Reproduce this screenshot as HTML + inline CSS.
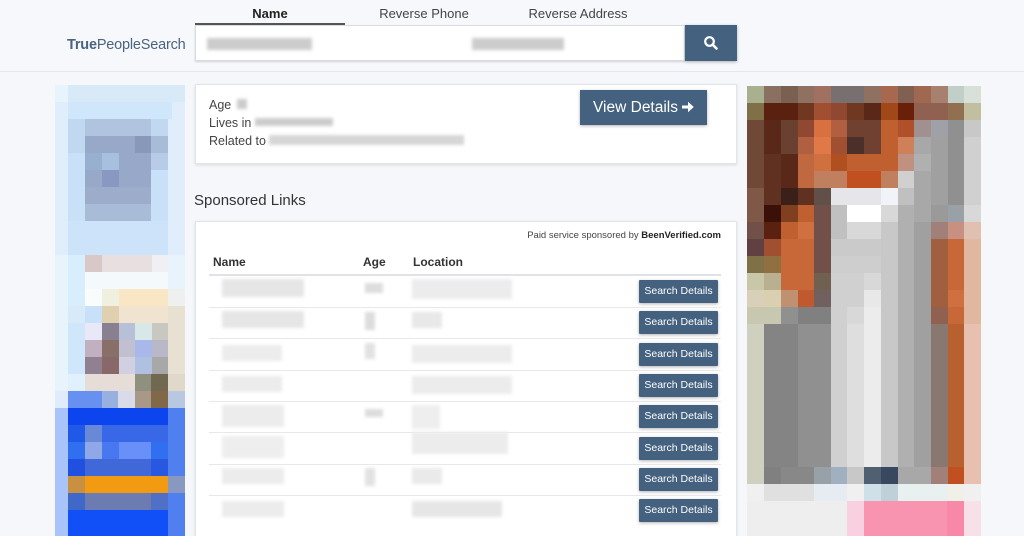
<!DOCTYPE html>
<html><head><meta charset="utf-8"><style>
*{margin:0;padding:0;box-sizing:border-box}
html,body{width:1024px;height:536px;overflow:hidden}
body{background:#f5f7fa;font-family:"Liberation Sans",sans-serif;color:#333;position:relative}
.a{position:absolute}
.hdr{left:0;top:0;width:1024px;height:72px;background:#f7f8fb;border-bottom:1px solid #e4e7ec}
.tab{top:6px;font-size:13px;color:#444;text-align:center}
.btn{background:#44617f;color:#fff;box-shadow:0 1px 3px rgba(0,0,0,.3)}
.card{background:#fff;border:1px solid #e2e5ea;box-shadow:0 1px 3px rgba(0,0,0,.12)}
.g{display:flex}
.g div{flex:none}
.bl{background:#e6e6e6;filter:blur(1.5px)}
.sd{left:639px;width:79px;height:23px;font-size:10.5px;line-height:23px;text-align:center;border-radius:1px}
.rl{left:209px;width:512px;height:1px;background:#e6e8eb}
</style></head><body>
<div class="a hdr"></div>
<div class="a tab" style="left:195px;width:150px;font-weight:bold;color:#222">Name</div>
<div class="a" style="left:195px;top:23px;width:150px;height:2px;background:#555"></div>
<div class="a tab" style="left:350px;width:148px">Reverse Phone</div>
<div class="a tab" style="left:500px;width:156px">Reverse Address</div>
<div class="a" style="left:67px;top:37px;font-size:14.5px;color:#4a6380;letter-spacing:-0.2px"><b>True</b>PeopleSearch</div>
<div class="a" style="left:195px;top:25px;width:490px;height:36px;background:#fff;border:1px solid #d8dce2;box-shadow:0 1px 2px rgba(0,0,0,.15)"></div>
<div class="a bl" style="left:207px;top:38px;width:105px;height:12px;background:#ccc"></div>
<div class="a bl" style="left:472px;top:38px;width:92px;height:12px;background:#ccc"></div>
<div class="a btn" style="left:685px;top:25px;width:52px;height:36px"></div>
<svg class="a" style="left:703px;top:35px" width="16" height="16" viewBox="0 0 16 16"><circle cx="6.5" cy="6.5" r="4.3" fill="none" stroke="#fff" stroke-width="2.2"/><path d="M9.6 9.6L13.5 13.5" stroke="#fff" stroke-width="2.6" stroke-linecap="round"/></svg>

<div class="a card" style="left:195px;top:84px;width:542px;height:80px"></div>
<div class="a" style="left:209px;top:96px;font-size:12.5px;line-height:18px;color:#444">Age<br>Lives in<br>Related to</div>
<div class="a bl" style="left:237px;top:99px;width:10px;height:10px;background:#ccc"></div>
<div class="a bl" style="left:255px;top:118px;width:78px;height:8px;background:#ccc"></div>
<div class="a bl" style="left:269px;top:135px;width:195px;height:10px;background:#d6d6d6"></div>
<div class="a btn" style="left:580px;top:90px;width:127px;height:35px;font-size:15.5px;line-height:35px;padding-left:13px">View Details</div>
<svg class="a" style="left:681px;top:100px" width="14" height="14" viewBox="0 0 14 14"><path d="M1 5.5H7V1.8L12.8 7L7 12.2V8.5H1Z" fill="#fff"/></svg>

<div class="a" style="left:194px;top:192px;font-size:15px;color:#333">Sponsored Links</div>
<div class="a card" style="left:195px;top:221px;width:542px;height:330px"></div>
<div class="a" style="left:400px;top:230px;width:321px;text-align:right;font-size:9.5px;color:#444">Paid service sponsored by <b style="color:#222">BeenVerified.com</b></div>
<div class="a" style="left:213px;top:255px;font-size:12px;font-weight:bold;color:#333">Name</div>
<div class="a" style="left:363px;top:255px;font-size:12px;font-weight:bold;color:#333">Age</div>
<div class="a" style="left:413px;top:255px;font-size:12px;font-weight:bold;color:#333">Location</div>
<div class="a" style="left:209px;top:274px;width:512px;height:2px;background:#dfe2e6"></div>

<div class="a rl" style="top:307px"></div><div class="a rl" style="top:338px"></div><div class="a rl" style="top:370px"></div><div class="a rl" style="top:401px"></div><div class="a rl" style="top:432px"></div><div class="a rl" style="top:464px"></div><div class="a rl" style="top:495px"></div>

<div class="a bl" style="left:222px;top:279px;width:82px;height:18px"></div><div class="a bl" style="left:365px;top:283px;width:18px;height:10px;background:#ddd"></div><div class="a bl" style="left:412px;top:279px;width:100px;height:20px;background:#ececec"></div>
<div class="a bl" style="left:222px;top:311px;width:82px;height:17px"></div><div class="a bl" style="left:365px;top:312px;width:10px;height:18px;background:#ddd"></div><div class="a bl" style="left:412px;top:312px;width:30px;height:16px;background:#e8e8e8"></div>
<div class="a bl" style="left:222px;top:345px;width:60px;height:16px;background:#ececec"></div><div class="a bl" style="left:365px;top:343px;width:10px;height:16px;background:#e2e2e2"></div><div class="a bl" style="left:412px;top:345px;width:100px;height:18px;background:#ececec"></div>
<div class="a bl" style="left:222px;top:376px;width:60px;height:16px;background:#ececec"></div><div class="a bl" style="left:412px;top:376px;width:100px;height:18px;background:#ececec"></div>
<div class="a bl" style="left:222px;top:405px;width:62px;height:22px;background:#ececec"></div><div class="a bl" style="left:365px;top:409px;width:18px;height:8px;background:#ddd"></div><div class="a bl" style="left:412px;top:405px;width:28px;height:24px;background:#eee"></div>
<div class="a bl" style="left:222px;top:436px;width:62px;height:22px;background:#eee"></div><div class="a bl" style="left:412px;top:432px;width:96px;height:22px;background:#ececec"></div>
<div class="a bl" style="left:222px;top:468px;width:62px;height:16px;background:#ececec"></div><div class="a bl" style="left:365px;top:468px;width:10px;height:18px;background:#e2e2e2"></div><div class="a bl" style="left:412px;top:468px;width:30px;height:16px;background:#eaeaea"></div>
<div class="a bl" style="left:222px;top:501px;width:62px;height:16px;background:#ececec"></div><div class="a bl" style="left:412px;top:501px;width:90px;height:16px;background:#e6e6e6"></div>

<div class="a btn sd" style="top:280px">Search Details</div>
<div class="a btn sd" style="top:311px">Search Details</div>
<div class="a btn sd" style="top:343px">Search Details</div>
<div class="a btn sd" style="top:374px">Search Details</div>
<div class="a btn sd" style="top:405px">Search Details</div>
<div class="a btn sd" style="top:437px">Search Details</div>
<div class="a btn sd" style="top:468px">Search Details</div>
<div class="a btn sd" style="top:499px">Search Details</div>

<!-- left image -->
<div class="a" style="left:55px;top:85px;width:130px">
<div class="g" style="height:17px"><div style="width:13px;background:#e8f4fc"></div><div style="width:117px;background:#d8eaf8"></div></div>
<div class="g" style="height:17px"><div style="width:13px;background:#e0eefc"></div><div style="width:104px;background:#d0e6fa"></div><div style="width:13px;background:#e0eefc"></div></div>
<div class="g" style="height:17px"><div style="width:13px;background:#e0eefc"></div><div style="width:17px;background:#c0d8f0"></div><div style="width:66px;background:#b0c4e0"></div><div style="width:17px;background:#c0d8f0"></div><div style="width:17px;background:#e0eefc"></div></div>
<div class="g" style="height:17px"><div style="width:13px;background:#e0eefc"></div><div style="width:17px;background:#c0d8f0"></div><div style="width:50px;background:#98a8c8"></div><div style="width:16px;background:#8898b8"></div><div style="width:17px;background:#a8bcd8"></div><div style="width:17px;background:#e0eefc"></div></div>
<div class="g" style="height:17px"><div style="width:13px;background:#e0eefc"></div><div style="width:17px;background:#c8e0f8"></div><div style="width:17px;background:#98b0d0"></div><div style="width:17px;background:#a8c0e0"></div><div style="width:32px;background:#98a8c8"></div><div style="width:17px;background:#b8cce8"></div><div style="width:17px;background:#e0eefc"></div></div>
<div class="g" style="height:17px"><div style="width:13px;background:#e0eefc"></div><div style="width:17px;background:#c8e0f8"></div><div style="width:17px;background:#98a8c8"></div><div style="width:17px;background:#8898c0"></div><div style="width:32px;background:#98a8c8"></div><div style="width:17px;background:#c8e0f8"></div><div style="width:17px;background:#e0eefc"></div></div>
<div class="g" style="height:17px"><div style="width:13px;background:#e0eefc"></div><div style="width:17px;background:#c8e0f8"></div><div style="width:66px;background:#9cacca"></div><div style="width:17px;background:#c8e0f8"></div><div style="width:17px;background:#e0eefc"></div></div>
<div class="g" style="height:17px"><div style="width:13px;background:#e0eefc"></div><div style="width:17px;background:#c8e0f8"></div><div style="width:66px;background:#a8bcd8"></div><div style="width:17px;background:#c8e0f8"></div><div style="width:17px;background:#e0eefc"></div></div>
<div class="g" style="height:34px"><div style="width:13px;background:#e0eefc"></div><div style="width:100px;background:#cce3f9"></div><div style="width:17px;background:#e0eefc"></div></div>
<div class="g" style="height:17px"><div style="width:13px;background:#e8f4fc"></div><div style="width:17px;background:#d8eefc"></div><div style="width:17px;background:#d8c8c8"></div><div style="width:50px;background:#e8e0e0"></div><div style="width:16px;background:#f0f0f4"></div><div style="width:17px;background:#e8f4fc"></div></div>
<div class="g" style="height:17px"><div style="width:13px;background:#e8f4fc"></div><div style="width:17px;background:#d8eefc"></div><div style="width:83px;background:#f4fafc"></div><div style="width:17px;background:#e8f4fc"></div></div>
<div class="g" style="height:17px"><div style="width:13px;background:#e8f4fc"></div><div style="width:17px;background:#d8eefc"></div><div style="width:17px;background:#f8fcfc"></div><div style="width:17px;background:#f0f0e0"></div><div style="width:49px;background:#f8e6c4"></div><div style="width:17px;background:#eef0f0"></div></div>
<div class="g" style="height:17px"><div style="width:13px;background:#e8f4fc"></div><div style="width:17px;background:#d8eaf8"></div><div style="width:17px;background:#c8e0f8"></div><div style="width:17px;background:#e0d0b0"></div><div style="width:49px;background:#f0e4d0"></div><div style="width:17px;background:#e8e0d0"></div></div>
<div class="g" style="height:17px"><div style="width:13px;background:#e8f4fc"></div><div style="width:17px;background:#d0e6fa"></div><div style="width:17px;background:#e8e8f8"></div><div style="width:17px;background:#888090"></div><div style="width:16px;background:#b8c0d8"></div><div style="width:17px;background:#d8e8e8"></div><div style="width:16px;background:#c8c8c0"></div><div style="width:17px;background:#e8e0d0"></div></div>
<div class="g" style="height:17px"><div style="width:13px;background:#e8f4fc"></div><div style="width:17px;background:#d0e6fa"></div><div style="width:17px;background:#c0b0c0"></div><div style="width:17px;background:#887068"></div><div style="width:16px;background:#c0c0d0"></div><div style="width:17px;background:#a8b8e8"></div><div style="width:16px;background:#b8b8c8"></div><div style="width:17px;background:#e8e0d0"></div></div>
<div class="g" style="height:17px"><div style="width:13px;background:#e8f4fc"></div><div style="width:17px;background:#d0e6fa"></div><div style="width:17px;background:#908090"></div><div style="width:17px;background:#886868"></div><div style="width:16px;background:#d0d0e0"></div><div style="width:17px;background:#b0c0e0"></div><div style="width:16px;background:#a8a8a8"></div><div style="width:17px;background:#e8e0d0"></div></div>
<div class="g" style="height:17px"><div style="width:13px;background:#e8f4fc"></div><div style="width:17px;background:#e0f0fc"></div><div style="width:50px;background:#e6ddd8"></div><div style="width:16px;background:#909080"></div><div style="width:17px;background:#706850"></div><div style="width:17px;background:#e0d8c8"></div></div>
<div class="g" style="height:17px"><div style="width:13px;background:#e0ecfc"></div><div style="width:34px;background:#6890f0"></div><div style="width:16px;background:#98b0e0"></div><div style="width:17px;background:#d8dce8"></div><div style="width:16px;background:#a89888"></div><div style="width:17px;background:#806848"></div><div style="width:17px;background:#b8c8e0"></div></div>
<div class="g" style="height:17px"><div style="width:13px;background:#a8c4f8"></div><div style="width:100px;background:#0c44ee"></div><div style="width:17px;background:#5080f0"></div></div>
<div class="g" style="height:17px"><div style="width:13px;background:#a8c4f8"></div><div style="width:17px;background:#2058e8"></div><div style="width:17px;background:#6888d8"></div><div style="width:66px;background:#3868e8"></div><div style="width:17px;background:#5080f0"></div></div>
<div class="g" style="height:17px"><div style="width:13px;background:#a8c4f8"></div><div style="width:17px;background:#3070f0"></div><div style="width:17px;background:#90a8e8"></div><div style="width:17px;background:#4878f0"></div><div style="width:32px;background:#6890f8"></div><div style="width:17px;background:#3070f0"></div><div style="width:17px;background:#5080f0"></div></div>
<div class="g" style="height:17px"><div style="width:13px;background:#a8c4f8"></div><div style="width:17px;background:#2050e0"></div><div style="width:66px;background:#4068d8"></div><div style="width:17px;background:#2858e0"></div><div style="width:17px;background:#5080f0"></div></div>
<div class="g" style="height:17px"><div style="width:13px;background:#a8c4f8"></div><div style="width:17px;background:#c89040"></div><div style="width:83px;background:#f29a12"></div><div style="width:17px;background:#8898c0"></div></div>
<div class="g" style="height:17px"><div style="width:13px;background:#a8c4f8"></div><div style="width:17px;background:#4068c8"></div><div style="width:66px;background:#6c7cb2"></div><div style="width:17px;background:#5070c8"></div><div style="width:17px;background:#5080f0"></div></div>
<div class="g" style="height:40px"><div style="width:13px;background:#a8c4f8"></div><div style="width:100px;background:#1050f6"></div><div style="width:17px;background:#5080f0"></div></div>
</div>

<!-- right image -->
<div class="a" style="left:747px;top:86px;width:234px">
<div class="g" style="height:17px"><div style="width:17px;background:#a8b090"></div><div style="width:17px;background:#8a7060"></div><div style="width:17px;background:#7a6050"></div><div style="width:16px;background:#907060"></div><div style="width:17px;background:#a07060"></div><div style="width:33px;background:#787070"></div><div style="width:17px;background:#907060"></div><div style="width:17px;background:#a86850"></div><div style="width:16px;background:#806050"></div><div style="width:17px;background:#a06850"></div><div style="width:17px;background:#a88070"></div><div style="width:16px;background:#c0d0c8"></div><div style="width:17px;background:#d8e0d8"></div></div>
<div class="g" style="height:17px"><div style="width:17px;background:#807048"></div><div style="width:34px;background:#5a2010"></div><div style="width:16px;background:#703820"></div><div style="width:17px;background:#a05030"></div><div style="width:16px;background:#904830"></div><div style="width:17px;background:#703820"></div><div style="width:17px;background:#5a2818"></div><div style="width:17px;background:#a04818"></div><div style="width:16px;background:#6a2008"></div><div style="width:34px;background:#906050"></div><div style="width:16px;background:#907050"></div><div style="width:17px;background:#c0c0a0"></div></div>
<div class="g" style="height:17px"><div style="width:17px;background:#704838"></div><div style="width:17px;background:#5a2818"></div><div style="width:17px;background:#6a4030"></div><div style="width:16px;background:#904830"></div><div style="width:17px;background:#d87040"></div><div style="width:16px;background:#b06040"></div><div style="width:34px;background:#704030"></div><div style="width:17px;background:#c06030"></div><div style="width:16px;background:#b05028"></div><div style="width:17px;background:#a09090"></div><div style="width:17px;background:#a0a0a8"></div><div style="width:16px;background:#909090"></div><div style="width:17px;background:#c8c8c8"></div></div>
<div class="g" style="height:17px"><div style="width:17px;background:#704838"></div><div style="width:17px;background:#5a2818"></div><div style="width:17px;background:#6a4030"></div><div style="width:16px;background:#b06040"></div><div style="width:17px;background:#e07848"></div><div style="width:16px;background:#a05030"></div><div style="width:17px;background:#4a3028"></div><div style="width:17px;background:#704030"></div><div style="width:17px;background:#c06030"></div><div style="width:16px;background:#d08058"></div><div style="width:17px;background:#a8a8a8"></div><div style="width:17px;background:#a0a0a0"></div><div style="width:16px;background:#909090"></div><div style="width:17px;background:#d0d0d0"></div></div>
<div class="g" style="height:17px"><div style="width:17px;background:#704838"></div><div style="width:17px;background:#603020"></div><div style="width:17px;background:#5a2818"></div><div style="width:16px;background:#c06840"></div><div style="width:17px;background:#d07040"></div><div style="width:16px;background:#b05020"></div><div style="width:51px;background:#c06030"></div><div style="width:16px;background:#c09080"></div><div style="width:17px;background:#b0b0b0"></div><div style="width:17px;background:#a0a0a0"></div><div style="width:16px;background:#909090"></div><div style="width:17px;background:#d0d0d0"></div></div>
<div class="g" style="height:17px"><div style="width:17px;background:#704838"></div><div style="width:17px;background:#603020"></div><div style="width:17px;background:#5a2818"></div><div style="width:16px;background:#c06840"></div><div style="width:33px;background:#c08060"></div><div style="width:34px;background:#c05020"></div><div style="width:17px;background:#c08060"></div><div style="width:16px;background:#d0d0d0"></div><div style="width:17px;background:#a8a8a8"></div><div style="width:17px;background:#a0a0a0"></div><div style="width:16px;background:#909090"></div><div style="width:17px;background:#d0d0d0"></div></div>
<div class="g" style="height:17px"><div style="width:17px;background:#805848"></div><div style="width:17px;background:#603020"></div><div style="width:17px;background:#3a2018"></div><div style="width:16px;background:#603020"></div><div style="width:17px;background:#605048"></div><div style="width:50px;background:#e6e6ea"></div><div style="width:17px;background:#f0f4f8"></div><div style="width:16px;background:#c0c0c0"></div><div style="width:17px;background:#a8a8a8"></div><div style="width:17px;background:#a0a0a0"></div><div style="width:16px;background:#909090"></div><div style="width:17px;background:#d0d0d0"></div></div>
<div class="g" style="height:17px"><div style="width:17px;background:#805848"></div><div style="width:17px;background:#3a1008"></div><div style="width:17px;background:#804020"></div><div style="width:16px;background:#c06030"></div><div style="width:17px;background:#705048"></div><div style="width:16px;background:#c0c0c0"></div><div style="width:34px;background:#ffffff"></div><div style="width:17px;background:#d8d8d8"></div><div style="width:16px;background:#b0b0b0"></div><div style="width:17px;background:#a8a8a8"></div><div style="width:17px;background:#9a9a9a"></div><div style="width:16px;background:#9aa0a8"></div><div style="width:17px;background:#d8d8d8"></div></div>
<div class="g" style="height:17px"><div style="width:17px;background:#705048"></div><div style="width:17px;background:#5a2010"></div><div style="width:17px;background:#c06030"></div><div style="width:16px;background:#d07040"></div><div style="width:17px;background:#705048"></div><div style="width:16px;background:#c0c0c0"></div><div style="width:34px;background:#d8d8d8"></div><div style="width:17px;background:#c8c8c8"></div><div style="width:16px;background:#b0b0b0"></div><div style="width:17px;background:#a0a0a0"></div><div style="width:17px;background:#a08078"></div><div style="width:16px;background:#c89080"></div><div style="width:17px;background:#e0c0b0"></div></div>
<div class="g" style="height:17px"><div style="width:17px;background:#604040"></div><div style="width:17px;background:#a05030"></div><div style="width:33px;background:#c86838"></div><div style="width:17px;background:#705048"></div><div style="width:50px;background:#cacaca"></div><div style="width:17px;background:#c8c8c8"></div><div style="width:16px;background:#b0b0b0"></div><div style="width:17px;background:#a0a0a0"></div><div style="width:17px;background:#a06040"></div><div style="width:16px;background:#c86838"></div><div style="width:17px;background:#e0b8a0"></div></div>
<div class="g" style="height:17px"><div style="width:17px;background:#807048"></div><div style="width:17px;background:#907040"></div><div style="width:33px;background:#c86838"></div><div style="width:17px;background:#705048"></div><div style="width:50px;background:#cecece"></div><div style="width:17px;background:#c8c8c8"></div><div style="width:16px;background:#b0b0b0"></div><div style="width:17px;background:#a0a0a0"></div><div style="width:17px;background:#a06040"></div><div style="width:16px;background:#c86838"></div><div style="width:17px;background:#e0b8a0"></div></div>
<div class="g" style="height:17px"><div style="width:17px;background:#c8c8a8"></div><div style="width:17px;background:#b8b090"></div><div style="width:33px;background:#c86838"></div><div style="width:17px;background:#706050"></div><div style="width:33px;background:#d0d0d0"></div><div style="width:17px;background:#d8d8d8"></div><div style="width:17px;background:#c8c8c8"></div><div style="width:16px;background:#b0b0b0"></div><div style="width:17px;background:#a0a0a0"></div><div style="width:17px;background:#a06040"></div><div style="width:16px;background:#c86838"></div><div style="width:17px;background:#e0b8a0"></div></div>
<div class="g" style="height:17px"><div style="width:17px;background:#d8d0b8"></div><div style="width:17px;background:#d8d0b0"></div><div style="width:17px;background:#c09070"></div><div style="width:16px;background:#c05830"></div><div style="width:17px;background:#706060"></div><div style="width:33px;background:#d0d0d0"></div><div style="width:17px;background:#e8e8e8"></div><div style="width:17px;background:#c8c8c8"></div><div style="width:16px;background:#b0b0b0"></div><div style="width:17px;background:#a0a0a0"></div><div style="width:17px;background:#a06040"></div><div style="width:16px;background:#d07040"></div><div style="width:17px;background:#e0b8a0"></div></div>
<div class="g" style="height:17px"><div style="width:34px;background:#c8c8b0"></div><div style="width:17px;background:#909090"></div><div style="width:33px;background:#808080"></div><div style="width:16px;background:#d0d0d0"></div><div style="width:17px;background:#d8d8d8"></div><div style="width:17px;background:#ececec"></div><div style="width:17px;background:#c8c8c8"></div><div style="width:16px;background:#b0b0b0"></div><div style="width:17px;background:#a0a0a0"></div><div style="width:17px;background:#906050"></div><div style="width:16px;background:#c86838"></div><div style="width:17px;background:#e0b8a0"></div></div>
<div class="g" style="height:143px"><div style="width:17px;background:#d0d0c0"></div><div style="width:34px;background:#848484"></div><div style="width:33px;background:#909090"></div><div style="width:16px;background:#d0d0d0"></div><div style="width:17px;background:#dedede"></div><div style="width:17px;background:#ececec"></div><div style="width:17px;background:#c8c8c8"></div><div style="width:16px;background:#b0b0b0"></div><div style="width:17px;background:#a0a0a0"></div><div style="width:17px;background:#887870"></div><div style="width:16px;background:#b86030"></div><div style="width:17px;background:#e8c0b0"></div></div>
<div class="g" style="height:17px"><div style="width:17px;background:#d0d0c0"></div><div style="width:17px;background:#808080"></div><div style="width:33px;background:#888888"></div><div style="width:17px;background:#98a0a8"></div><div style="width:16px;background:#a0b0c0"></div><div style="width:17px;background:#c8c8c8"></div><div style="width:17px;background:#506070"></div><div style="width:17px;background:#384860"></div><div style="width:33px;background:#a8a8a8"></div><div style="width:17px;background:#a08078"></div><div style="width:16px;background:#c05020"></div><div style="width:17px;background:#e8c0b0"></div></div>
<div class="g" style="height:17px"><div style="width:17px;background:#f0f0f0"></div><div style="width:50px;background:#e0e0e0"></div><div style="width:33px;background:#e6ecf2"></div><div style="width:17px;background:#f0f0f0"></div><div style="width:17px;background:#d0e0e8"></div><div style="width:17px;background:#c0d0d8"></div><div style="width:49px;background:#e8f0f0"></div><div style="width:17px;background:#f0f0e8"></div><div style="width:17px;background:#f0f0f0"></div></div>
<div class="g" style="height:60px"><div style="width:100px;background:#eeeeef"></div><div style="width:17px;background:#f8d0e0"></div><div style="width:83px;background:#f894b0"></div><div style="width:17px;background:#f888a8"></div><div style="width:17px;background:#f8e0e8"></div></div>
</div>
</body></html>
